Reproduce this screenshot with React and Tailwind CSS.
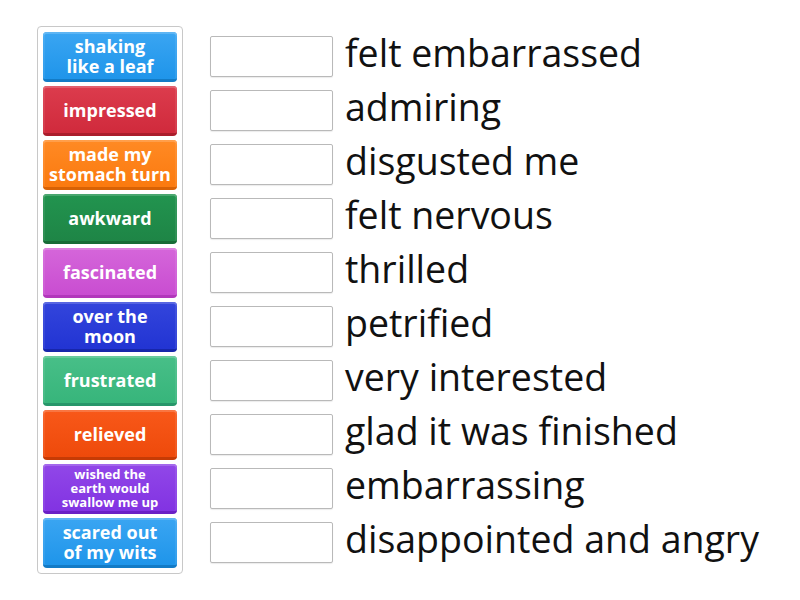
const tiles = [
  { lines: ['shaking', 'like a leaf'], bg: 'bg-[#1f95ea]', top: 'from-[#3aa5f2]', edge: 'border-b-[#137bc6]', size: 'text-[18px] leading-[20px]' },
  { lines: ['impressed'], bg: 'bg-[#d02a3c]', top: 'from-[#dc3c4d]', edge: 'border-b-[#ab1d2c]', size: 'text-[18px] leading-[20px]' },
  { lines: ['made my', 'stomach turn'], bg: 'bg-[#fb7a0f]', top: 'from-[#ff8a24]', edge: 'border-b-[#d86205]', size: 'text-[18px] leading-[20px]' },
  { lines: ['awkward'], bg: 'bg-[#1e8546]', top: 'from-[#22944f]', edge: 'border-b-[#176b36]', size: 'text-[18px] leading-[20px]' },
  { lines: ['fascinated'], bg: 'bg-[#c94dd1]', top: 'from-[#d566da]', edge: 'border-b-[#b237bb]', size: 'text-[18px] leading-[20px]' },
  { lines: ['over the', 'moon'], bg: 'bg-[#2234d3]', top: 'from-[#3345dc]', edge: 'border-b-[#1726ab]', size: 'text-[18px] leading-[20px]' },
  { lines: ['frustrated'], bg: 'bg-[#37b57b]', top: 'from-[#48bf88]', edge: 'border-b-[#27966a]', size: 'text-[18px] leading-[20px]' },
  { lines: ['relieved'], bg: 'bg-[#ee4a0b]', top: 'from-[#f85819]', edge: 'border-b-[#c63b05]', size: 'text-[18px] leading-[20px]' },
  { lines: ['wished the', 'earth would', 'swallow me up'], bg: 'bg-[#8233e2]', top: 'from-[#9147e8]', edge: 'border-b-[#6a1fc6]', size: 'text-[13px] leading-[14px]' },
  { lines: ['scared out', 'of my wits'], bg: 'bg-[#1f95ea]', top: 'from-[#3aa5f2]', edge: 'border-b-[#137bc6]', size: 'text-[18px] leading-[20px]' },
];

const answers = [
  'felt embarrassed',
  'admiring',
  'disgusted me',
  'felt nervous',
  'thrilled',
  'petrified',
  'very interested',
  'glad it was finished',
  'embarrassing',
  'disappointed and angry',
];

const Tile = ({ tile }) => (
  <div
    className={`h-[50px] rounded-[4px] border-b-[3px] ${tile.edge} ${tile.bg} bg-gradient-to-b ${tile.top} to-transparent shadow-[inset_0_2px_0_rgba(255,255,255,0.18),inset_2px_0_0_rgba(255,255,255,0.08),inset_-2px_0_0_rgba(255,255,255,0.08)] flex flex-col items-center justify-center text-center text-white font-bold whitespace-nowrap ${tile.size}`}
  >
    {tile.lines.map((l) => (
      <span key={l}>{l}</span>
    ))}
  </div>
);

const App = () => {
  return (
    <div className="w-[800px] h-[600px] bg-white flex font-['Open_Sans',sans-serif]">
      <div className="ml-[37px] mt-[26px] w-[146px] h-[548px] border border-[#c8c8c8] rounded-[4px] p-[5px] flex flex-col gap-[4px]">
        {tiles.map((t) => (
          <Tile key={t.lines.join(' ')} tile={t} />
        ))}
      </div>

      <div className="ml-[27px] mt-[36px] flex flex-col gap-[13px]">
        {answers.map((a) => (
          <div key={a} className="flex items-center gap-[12px] h-[41px]">
            <div className="w-[123px] h-[41px] bg-white border border-[#b9b9b9] rounded-[2px] shadow-[0_1px_1px_rgba(0,0,0,0.08)]" />
            <span className="text-[37.5px] leading-none text-[#111] whitespace-nowrap mb-[7px]">{a}</span>
          </div>
        ))}
      </div>
    </div>
  );
};

export default App;
